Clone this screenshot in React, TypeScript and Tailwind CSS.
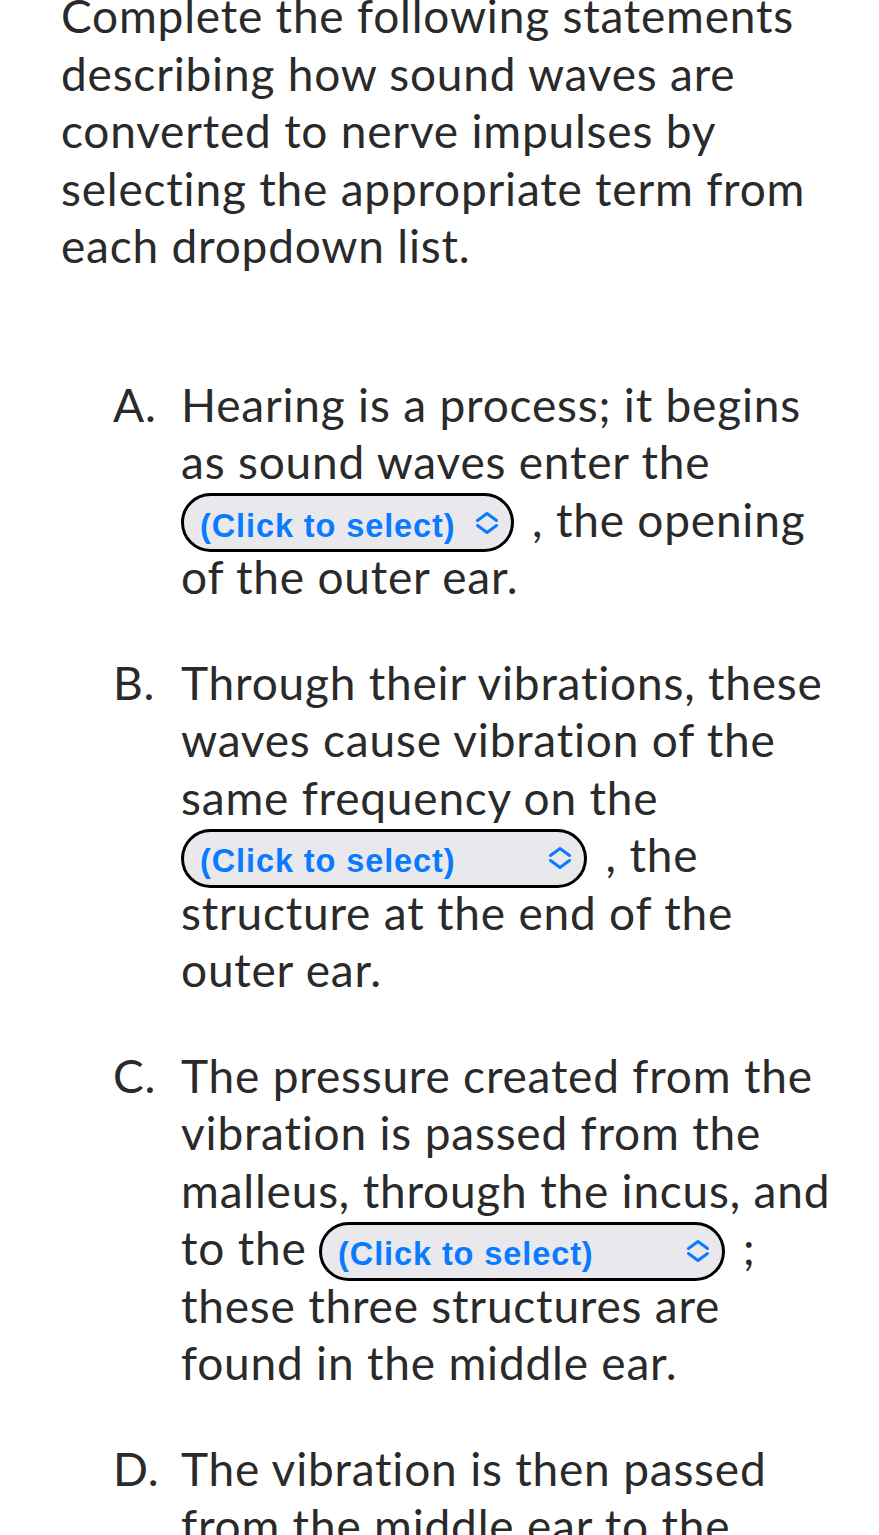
import React from "react";

function UpDownIcon() {
  return (
    <svg width="24" height="24" viewBox="0 0 24 24" fill="none" stroke="currentColor" strokeWidth="3" strokeLinecap="round" strokeLinejoin="round" className="shrink-0">
      <path d="M2.5 9.5 L12 2.5 L21.5 9.5" />
      <path d="M2.5 14.5 L12 21.5 L21.5 14.5" />
    </svg>
  );
}

function Dropdown({ wide, className = "" }: { wide?: boolean; className?: string }) {
  return (
    <span
      className={`inline-flex h-[59px] -mb-2 items-center justify-between rounded-full border-[3px] border-black bg-[#e9e9ed] pl-4 pr-[12px] align-baseline text-[#0a7aff] ${wide ? "w-[406px]" : "gap-[19px]"} ${className}`}
    >
      <span className="pt-[6px] text-[32.5px] leading-none font-bold tracking-[0.9px] [font-family:'Liberation_Sans',Arial,sans-serif]">(Click to select)</span>
      <UpDownIcon />
    </span>
  );
}

const items = [
  {
    label: "A.",
    body: (
      <>
        Hearing is a process; it begins
        <br />
        as sound waves enter the
        <br />
        <Dropdown className="mr-[6px]" /> , the opening
        <br />
        of the outer ear.
      </>
    ),
  },
  {
    label: "B.",
    body: (
      <>
        Through their vibrations, these
        <br />
        waves cause vibration of the
        <br />
        same frequency on the
        <br />
        <Dropdown wide className="mr-[6px]" /> , the
        <br />
        structure at the end of the
        <br />
        outer ear.
      </>
    ),
  },
  {
    label: "C.",
    body: (
      <>
        The pressure created from the
        <br />
        vibration is passed from the
        <br />
        malleus, through the incus, and
        <br />
        to the <Dropdown wide className="mr-[5px]" /> ;
        <br />
        these three structures are
        <br />
        found in the middle ear.
      </>
    ),
  },
  {
    label: "D.",
    body: (
      <>
        The vibration is then passed
        <br />
        from the middle ear to the
        <br />
        inner ear.
      </>
    ),
  },
];

export default function App() {
  return (
    <div className="min-h-screen overflow-hidden bg-white px-[61px] text-[46px] leading-[57.5px] tracking-[0.8px] text-[#2a2a2a] [font-variant-ligatures:none] [font-family:Lato,'Noto_Sans',sans-serif]">
      <p className="-mt-[13px] whitespace-nowrap">
        Complete the following statements
        <br />
        describing how sound waves are
        <br />
        converted to nerve impulses by
        <br />
        selecting the appropriate term from
        <br />
        each dropdown list.
      </p>

      <ol className="mt-[101px] flex flex-col gap-[48px] pl-[52px]">
        {items.map((item) => (
          <li key={item.label} className="flex">
            <span className="w-[68px] shrink-0">{item.label}</span>
            <div className="whitespace-nowrap">{item.body}</div>
          </li>
        ))}
      </ol>
    </div>
  );
}
